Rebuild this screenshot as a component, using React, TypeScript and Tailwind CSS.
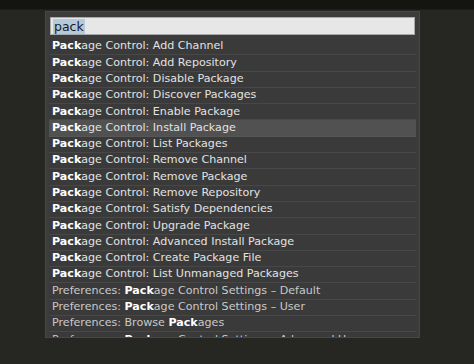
import React from 'react';

type Item = { pre?: string; match: string; rest: string };

const items: Item[] = [
    { match: "Pack", rest: "age Control: Add Channel" },
    { match: "Pack", rest: "age Control: Add Repository" },
    { match: "Pack", rest: "age Control: Disable Package" },
    { match: "Pack", rest: "age Control: Discover Packages" },
    { match: "Pack", rest: "age Control: Enable Package" },
    { match: "Pack", rest: "age Control: Install Package" },
    { match: "Pack", rest: "age Control: List Packages" },
    { match: "Pack", rest: "age Control: Remove Channel" },
    { match: "Pack", rest: "age Control: Remove Package" },
    { match: "Pack", rest: "age Control: Remove Repository" },
    { match: "Pack", rest: "age Control: Satisfy Dependencies" },
    { match: "Pack", rest: "age Control: Upgrade Package" },
    { match: "Pack", rest: "age Control: Advanced Install Package" },
    { match: "Pack", rest: "age Control: Create Package File" },
    { match: "Pack", rest: "age Control: List Unmanaged Packages" },
    { pre: "Preferences: ", match: "Pack", rest: "age Control Settings – Default" },
    { pre: "Preferences: ", match: "Pack", rest: "age Control Settings – User" },
    { pre: "Preferences: Browse ", match: "Pack", rest: "ages" },
    { pre: "Preferences: ", match: "Pack", rest: "age Control Settings – Advanced User" },
];

const SELECTED = 5;

export default function App() {
    return (
        <div className="w-[474px] h-[364px] bg-[#262622] flex flex-col overflow-hidden font-['DejaVu_Sans',sans-serif]">
            <div className="h-[10px] bg-[#141411] border-b border-[#1d1d1a] shrink-0" />

            <div className="mt-[1px] ml-[45px] w-[375px] h-[327px] bg-[#3c3c3c] border border-[#474747] flex flex-col px-[3px] pt-[5px] overflow-hidden">
                <div className="h-[18px] mx-[1px] bg-[#e7e7e7] border border-[#a8a8a8] flex items-center pl-[2px] shrink-0">
                    <span className="bg-[#b3c9dc] text-[#1b1b1b] text-[12.5px] leading-[15px] px-[1px]">pack</span>
                </div>

                <div className="mt-[4px] flex flex-col">
                    {items.map((item, i) => (
                        <div
                            key={i}
                            className={
                                i === SELECTED
                                    ? "h-[16.3px] shrink-0 flex items-center pl-[3px] bg-[#515151] border-b border-[#575757] text-[11.1px] whitespace-pre"
                                    : "h-[16.3px] shrink-0 flex items-center pl-[3px] bg-[#3a3a3a] border-b border-[#474747] text-[11.1px] whitespace-pre"
                            }
                        >
                            <span className={item.pre ? "text-[#c9c9c9]" : "text-[#e2e2e2]"}>
                                {item.pre}
                                <span className="font-bold text-white">{item.match}</span>
                                {item.rest}
                            </span>
                        </div>
                    ))}
                </div>
            </div>
        </div>
    );
}
